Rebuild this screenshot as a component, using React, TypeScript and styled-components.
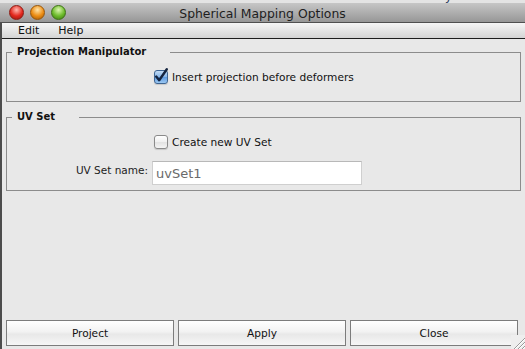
import styled, { createGlobalStyle } from 'styled-components';

const UI_FONT = `"DejaVu Sans", "Liberation Sans", sans-serif`;

const GlobalStyle = createGlobalStyle`
  html, body {
    margin: 0;
    padding: 0;
    width: 525px;
    height: 349px;
    overflow: hidden;
    background: #e8e8e8;
  }
  * {
    box-sizing: border-box;
  }
`;

interface CheckProps {
  checked?: boolean;
}

function CheckMark() {
  return (
    <svg width='16' height='16' viewBox='0 0 16 16' style={{ overflow: 'visible' }}>
      <path d='M3.2 7.6 L6.2 11.2 L13.8 0.2' fill='none' stroke='#14243f' strokeWidth='2.4' strokeLinecap='round' strokeLinejoin='round' />
    </svg>
  );
}

function ResizeGrip() {
  return (
    <svg width='14' height='14' viewBox='0 0 14 14'>
      <rect x='0' y='0' width='14' height='14' fill='#eeeeee' />
      <path d='M3 14 L14 3 M7 14 L14 7 M11 14 L14 11' stroke='#9a9a9a' strokeWidth='1' />
      <path d='M4 14 L14 4 M8 14 L14 8 M12 14 L14 12' stroke='#ffffff' strokeWidth='1' />
    </svg>
  );
}

function Checkbox({ checked }: CheckProps) {
  return <CheckBox checked={checked}>{checked ? <CheckMark /> : null}</CheckBox>;
}

export default function App() {
  return (
    <Window>
      <GlobalStyle />
      <DesktopStrip aria-hidden>
        <span>erations • Surfaces • Deformation • Animation • Dynamics • Rendering</span>
      </DesktopStrip>
      <TitleBar>
        <Lights>
          <Light color='red' />
          <Light color='orange' />
          <Light color='green' />
        </Lights>
        <Title>Spherical Mapping Options</Title>
      </TitleBar>
      <Frame>
        <MenuBar>
          <MenuItem>Edit</MenuItem>
          <MenuItem>Help</MenuItem>
        </MenuBar>
        <Content>
          <Group>
            <Legend>Projection Manipulator</Legend>
            <FormGrid>
              <span />
              <CheckRow>
                <Checkbox checked />
                <Text>Insert projection before deformers</Text>
              </CheckRow>
            </FormGrid>
          </Group>
          <Group $last>
            <Legend>UV Set</Legend>
            <FormGrid>
              <span />
              <CheckRow>
                <Checkbox />
                <Text>Create new UV Set</Text>
              </CheckRow>
              <FieldLabel>UV Set name:</FieldLabel>
              <NameInput>uvSet1</NameInput>
            </FormGrid>
          </Group>
        </Content>
        <ButtonRow>
          <Button>Project</Button>
          <Button>Apply</Button>
          <Button>Close</Button>
        </ButtonRow>
        <Grip>
          <ResizeGrip />
        </Grip>
      </Frame>
    </Window>
  );
}

const LIGHT_COLORS: Record<string, [string, string, string]> = {
  red: ['#ffb8b0', '#e3271d', '#8e1a12'],
  orange: ['#ffe4a8', '#ec8c12', '#9a5608'],
  green: ['#dcf7b0', '#6cbb2a', '#3d7414'],
};

const Window = styled.div`
  position: relative;
  display: flex;
  flex-direction: column;
  width: 525px;
  height: 349px;
  font-family: ${UI_FONT};
  color: #111;
  background: #e8e8e8;
`;

const DesktopStrip = styled.div`
  height: 3px;
  overflow: hidden;
  background: #e4e4e4;
  font-size: 12px;
  line-height: 13px;
  white-space: nowrap;
  color: #2a3a5a;

  span {
    display: block;
    margin-top: -10px;
    padding-left: 28px;
    word-spacing: 14px;
  }
`;

const TitleBar = styled.div`
  position: relative;
  display: flex;
  align-items: center;
  justify-content: center;
  height: 20px;
  background: linear-gradient(#c6c6c6, #aaaaaa 60%, #979797);
  border-bottom: 1px solid #505050;
`;

const Lights = styled.div`
  position: absolute;
  left: 9px;
  top: 2px;
  display: flex;
  gap: 6px;
`;

const Light = styled.span<{ color: string }>`
  width: 15px;
  height: 15px;
  border-radius: 50%;
  border: 1px solid ${({ color }) => LIGHT_COLORS[color][2]};
  background: radial-gradient(
    circle at 50% 30%,
    ${({ color }) => LIGHT_COLORS[color][0]} 0%,
    ${({ color }) => LIGHT_COLORS[color][1]} 55%,
    ${({ color }) => LIGHT_COLORS[color][2]} 100%
  );
`;

const Title = styled.div`
  font-size: 12.4px;
  color: #1e1e1e;
  padding-top: 1px;
`;

const Frame = styled.div`
  position: relative;
  flex: 1;
  display: flex;
  flex-direction: column;
  border-left: 2px solid #4c4c4c;
`;

const MenuBar = styled.div`
  display: flex;
  align-items: center;
  gap: 19px;
  height: 16px;
  padding-left: 16px;
  background: linear-gradient(#f6f6f6, #e2e2e2 60%, #d4d4d4);
  border-bottom: 1px solid #1e1e1e;
`;

const MenuItem = styled.span`
  font-size: 11px;
  line-height: 14px;
  color: #111;
`;

const Content = styled.div`
  flex: 1;
  display: flex;
  flex-direction: column;
  gap: 8px;
  padding: 6px 4px 0 4px;
`;

const Group = styled.fieldset<{ $last?: boolean }>`
  margin: 0;
  padding: 11px 0 ${({ $last }) => ($last ? 5 : 17)}px 0;
  border: 1px solid #8c8c8c;
  min-width: 0;
`;

const Legend = styled.legend`
  margin-left: 5px;
  padding: 0 24px 0 5px;
  font-size: 10px;
  font-weight: bold;
  line-height: 14px;
  color: #111;
`;

const FormGrid = styled.div`
  display: grid;
  grid-template-columns: 141px 1fr;
  column-gap: 4px;
  row-gap: 12px;
  align-items: start;
`;

const CheckRow = styled.div`
  display: flex;
  align-items: center;
  gap: 4px;
  height: 14px;
  padding-left: 2px;
`;

const CheckBox = styled.span<CheckProps>`
  display: flex;
  align-items: center;
  justify-content: center;
  width: 14px;
  height: 14px;
  border-radius: 3px;
  border: 1px solid ${({ checked }) => (checked ? '#3f6693' : '#8a8a8a')};
  background: ${({ checked }) =>
    checked
      ? 'linear-gradient(#c4dcf5, #86b5e8 50%, #5d9ae0 51%, #9cc8f2)'
      : 'linear-gradient(#ffffff, #f0f0f0 50%, #e2e2e2 51%, #f4f4f4)'};
  box-shadow: 0 1px 1px rgba(0, 0, 0, 0.15);
`;

const Text = styled.span`
  font-size: 10.6px;
  line-height: 14px;
  color: #111;
  white-space: nowrap;
`;

const FieldLabel = styled.span`
  padding-top: 2px;
  text-align: right;
  font-size: 10.5px;
  line-height: 14px;
  color: #222;
`;

const NameInput = styled.div`
  width: 210px;
  height: 24px;
  padding: 0 3px;
  display: flex;
  align-items: center;
  background: #fff;
  border: 1px solid #cfcfcf;
  border-top-color: #b8b8b8;
  font-size: 13px;
  color: #6a6a6a;
`;

const ButtonRow = styled.div`
  display: flex;
  gap: 4px;
  padding: 0 7px 3px 4px;
`;

const Button = styled.button`
  flex: 1;
  height: 26px;
  margin: 0;
  padding: 0;
  font-family: ${UI_FONT};
  font-size: 10.6px;
  color: #111;
  border: 1px solid #7c7c7c;
  border-radius: 0;
  background: linear-gradient(#ffffff, #f2f2f2 45%, #e8e8e8 55%, #f6f6f6);
`;

const Grip = styled.div`
  position: absolute;
  right: 0;
  bottom: 0;
  width: 14px;
  height: 14px;
  line-height: 0;
`;
